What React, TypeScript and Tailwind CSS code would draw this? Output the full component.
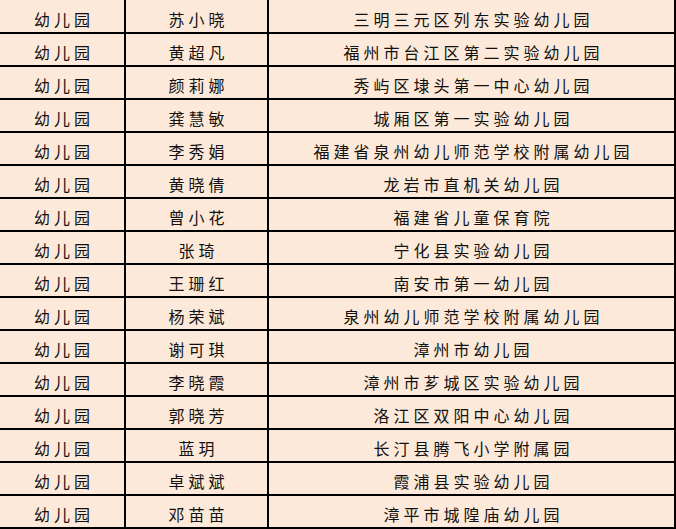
const rows: [string, string][] = [
  ["苏小晓", "三明三元区列东实验幼儿园"],
  ["黄超凡", "福州市台江区第二实验幼儿园"],
  ["颜莉娜", "秀屿区埭头第一中心幼儿园"],
  ["龚慧敏", "城厢区第一实验幼儿园"],
  ["李秀娟", "福建省泉州幼儿师范学校附属幼儿园"],
  ["黄晓倩", "龙岩市直机关幼儿园"],
  ["曾小花", "福建省儿童保育院"],
  ["张琦", "宁化县实验幼儿园"],
  ["王珊红", "南安市第一幼儿园"],
  ["杨荣斌", "泉州幼儿师范学校附属幼儿园"],
  ["谢可琪", "漳州市幼儿园"],
  ["李晓霞", "漳州市芗城区实验幼儿园"],
  ["郭晓芳", "洛江区双阳中心幼儿园"],
  ["蓝玥", "长汀县腾飞小学附属园"],
  ["卓斌斌", "霞浦县实验幼儿园"],
  ["邓苗苗", "漳平市城隍庙幼儿园"],
];

export default function App() {
  return (
    <div
      className="w-[676px] h-[529px] overflow-hidden bg-[#fde9d9] text-[16px] text-[#111] tracking-[4px]"
      style={{ fontFamily: '"Noto Sans CJK SC", "Noto Sans", sans-serif' }}
    >
      {rows.map(([name, school], i) => (
        <div
          key={i}
          className={`flex border-b-2 border-black ${i === 0 ? "h-[34px]" : "h-[33px]"}`}
        >
          <div className="w-[126px] shrink-0 border-r-2 border-black flex items-center justify-center pt-[5px] pl-[4px] leading-none">
            幼儿园
          </div>
          <div className="w-[143px] shrink-0 border-r-2 border-black flex items-center justify-center pt-[5px] pl-[4px] leading-none">
            {name}
          </div>
          <div className="flex-1 border-r-2 border-black flex items-center justify-center pt-[5px] pl-[4px] leading-none">
            {school}
          </div>
        </div>
      ))}
    </div>
  );
}
